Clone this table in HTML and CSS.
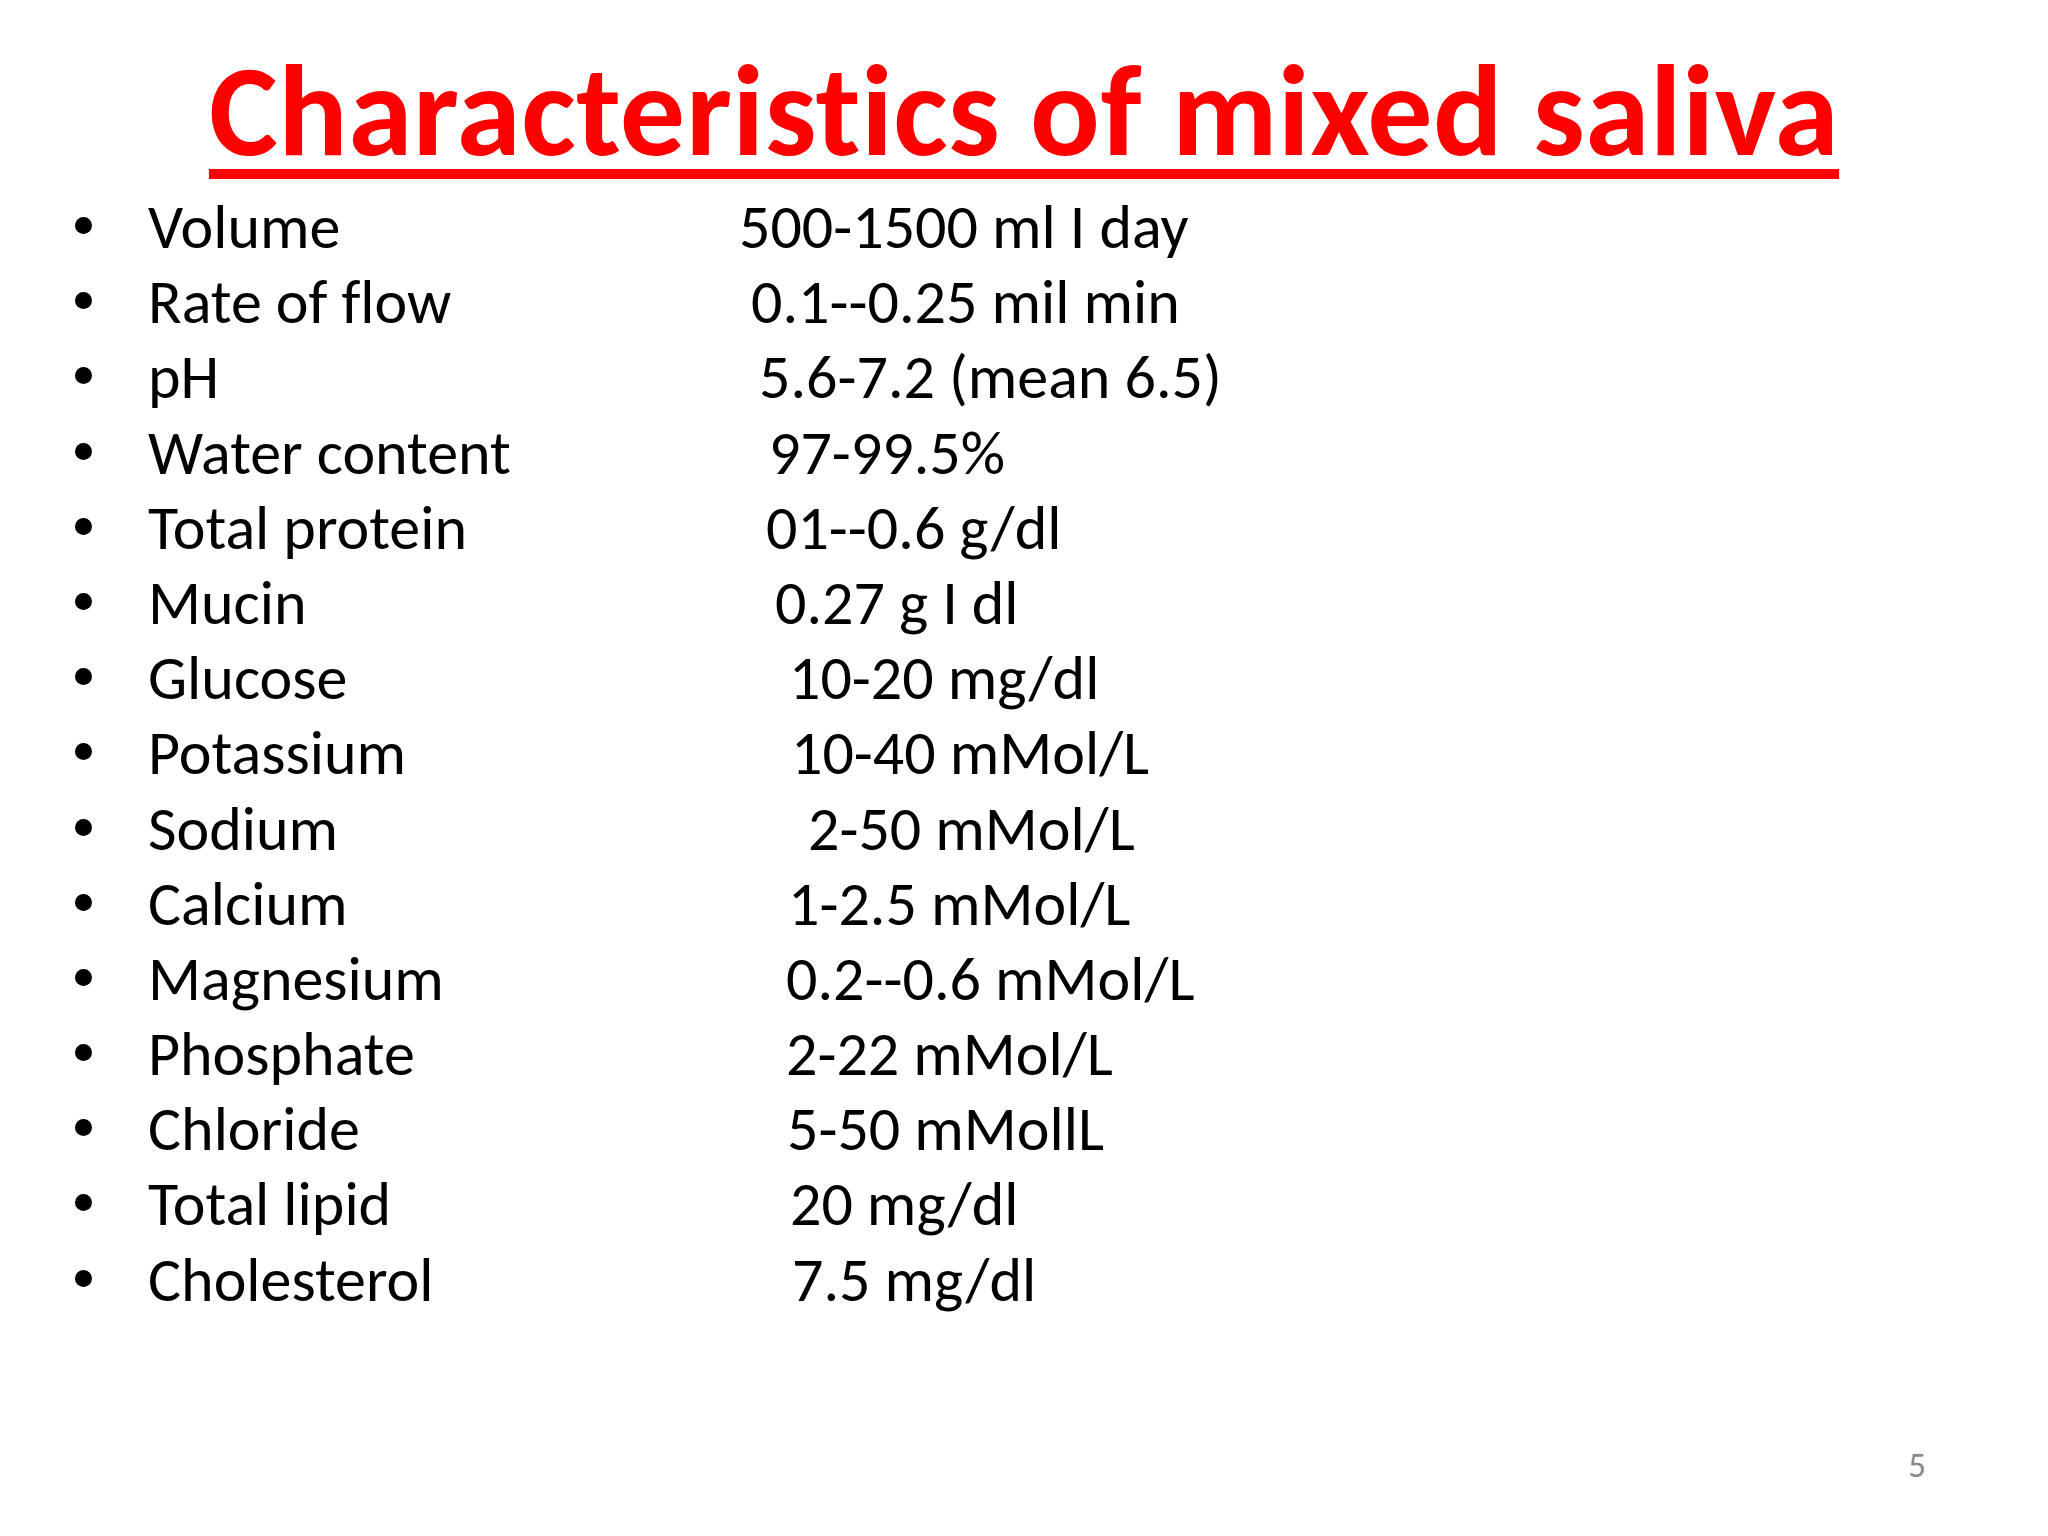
FILE: index.html
```html
<!DOCTYPE html>
<html>
<head>
<meta charset="utf-8">
<title>Characteristics of mixed saliva</title>
<link rel="stylesheet" href="styles.css">
</head>
<body>
<div class="slide">
  <h1 class="title"><span class="title-text">Characteristics of mixed saliva</span></h1>
  <ul class="list">
    <li class="row"><span class="dot"></span><span class="label">Volume</span><span class="value">500-1500 ml I day</span></li>
    <li class="row"><span class="dot"></span><span class="label">Rate of flow</span><span class="value in-12">0.1--0.25 mil min</span></li>
    <li class="row"><span class="dot"></span><span class="label">pH</span><span class="value in-20">5.6-7.2 (mean 6.5)</span></li>
    <li class="row"><span class="dot"></span><span class="label">Water content</span><span class="value in-30">97-99.5%</span></li>
    <li class="row"><span class="dot"></span><span class="label">Total protein</span><span class="value in-27">01--0.6 g/dl</span></li>
    <li class="row"><span class="dot"></span><span class="label">Mucin</span><span class="value in-36">0.27 g I dl</span></li>
    <li class="row"><span class="dot"></span><span class="label">Glucose</span><span class="value in-50">10-20 mg/dl</span></li>
    <li class="row"><span class="dot"></span><span class="label">Potassium</span><span class="value in-52">10-40 mMol/L</span></li>
    <li class="row"><span class="dot"></span><span class="label">Sodium</span><span class="value in-69">2-50 mMol/L</span></li>
    <li class="row"><span class="dot"></span><span class="label">Calcium</span><span class="value in-49">1-2.5 mMol/L</span></li>
    <li class="row"><span class="dot"></span><span class="label">Magnesium</span><span class="value in-47">0.2--0.6 mMol/L</span></li>
    <li class="row"><span class="dot"></span><span class="label">Phosphate</span><span class="value in-47">2-22 mMol/L</span></li>
    <li class="row"><span class="dot"></span><span class="label">Chloride</span><span class="value in-48">5-50 mMollL</span></li>
    <li class="row"><span class="dot"></span><span class="label">Total lipid</span><span class="value in-51">20 mg/dl</span></li>
    <li class="row"><span class="dot"></span><span class="label">Cholesterol</span><span class="value in-53">7.5 mg/dl</span></li>
  </ul>
  <div class="page-num">5</div>
</div>
</body>
</html>
```
FILE: styles.css
```css
html, body {
  margin: 0;
  padding: 0;
  background: #ffffff;
}

.slide {
  width: 2048px;
  height: 1536px;
  display: flex;
  flex-direction: column;
  background: #ffffff;
  font-family: "Carlito", "Liberation Sans", sans-serif;
  font-variant-ligatures: none;
  color: #000000;
  overflow: hidden;
}

.title {
  margin: 0;
  padding-top: 46px;
  text-align: center;
  font-family: "Carlito", "Liberation Sans", sans-serif;
  font-weight: bold;
  font-size: 130px;
  line-height: 129px;
  letter-spacing: 0.4px;
  color: #ff0000;
  font-variant-ligatures: none;
}

.title-text {
  text-decoration: underline;
  text-decoration-color: #ff0000;
  text-decoration-thickness: 10px;
  text-underline-offset: 14px;
  text-decoration-skip-ink: none;
}

.list {
  list-style: none;
  margin: 15px 0 0 0;
  padding: 0;
}

.row {
  display: grid;
  grid-template-columns: 148px 591px 1fr;
  height: 75.2px;
  font-size: 62px;
  line-height: 75.2px;
  white-space: nowrap;
}

.dot {
  width: 17px;
  height: 17px;
  border-radius: 50%;
  background: #000000;
  margin-left: 74.5px;
  margin-top: 27px;
}

.value { padding-left: 0; }
.in-12 { padding-left: 12px; }
.in-20 { padding-left: 20px; }
.in-27 { padding-left: 27px; }
.in-30 { padding-left: 30px; }
.in-36 { padding-left: 36px; }
.in-47 { padding-left: 47px; }
.in-48 { padding-left: 48px; }
.in-49 { padding-left: 49px; }
.in-50 { padding-left: 50px; }
.in-51 { padding-left: 51px; }
.in-52 { padding-left: 52px; }
.in-53 { padding-left: 53px; }
.in-69 { padding-left: 69px; }

.page-num {
  margin-top: auto;
  padding: 0 122px 53px 0;
  text-align: right;
  font-size: 35px;
  line-height: 35px;
  color: #898989;
}
```
